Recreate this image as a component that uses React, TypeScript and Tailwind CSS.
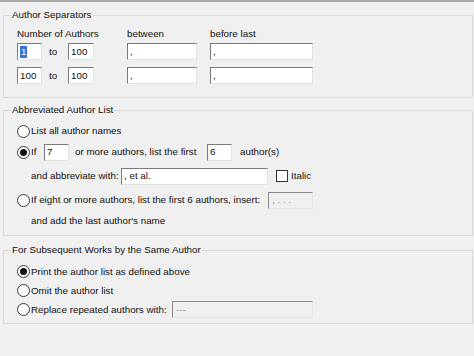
const Radio = ({ checked }: { checked?: boolean }) => (
  <span className="w-[13px] h-[13px] rounded-full border border-[#3a3a3a] bg-white flex items-center justify-center shrink-0">
    {checked && <span className="w-[7px] h-[7px] rounded-full bg-[#111]" />}
  </span>
);

const Box = ({ className, children }: { className: string; children?: React.ReactNode }) => (
  <div
    className={
      'h-[17px] border border-t-[#7a7a7a] border-l-[#7a7a7a] border-r-[#e2e2e2] border-b-[#e2e2e2] bg-white flex items-center pl-[2px] shrink-0 ' +
      className
    }
  >
    {children}
  </div>
);

const Disabled = ({ className, children }: { className: string; children?: React.ReactNode }) => (
  <div
    className={
      'h-[17px] border border-t-[#8a8a8a] border-l-[#8a8a8a] border-r-[#e6e6e6] border-b-[#e6e6e6] bg-[#f0f0f0] flex items-center pl-[3px] text-[#9a9a9a] shrink-0 ' +
      className
    }
  >
    {children}
  </div>
);

export default function App() {
  return (
    <div
      className="w-[474px] h-[356px] bg-[#f0f0f0] text-[#111] text-[9.8px] leading-[12px] overflow-hidden"
      style={{ fontFamily: '"Liberation Sans", Arial, sans-serif' }}
    >
      <div className="h-[2px] bg-[#ababab]" />

      {/* Author Separators */}
      <fieldset className="mt-[7px] ml-[3px] mr-[1px] border border-[#d9d9d9] px-0 pt-[7px] pb-[13px]">
        <legend className="ml-[7px] px-[1px] leading-[12px]">Author Separators</legend>
        <div className="pl-[13px]">
          <div className="flex h-[12px] items-center">
            <span className="w-[110px]">Number of Authors</span>
            <span className="w-[83px]">between</span>
            <span>before last</span>
          </div>
          <div className="flex items-center mt-[3px]">
            <Box className="w-[25px]">
              <span className="bg-[#3377d6] text-white px-[1px]">1</span>
            </Box>
            <span className="w-[19px] ml-[7px]">to</span>
            <Box className="w-[26px]">100</Box>
            <Box className="w-[70px] ml-[33px]">,</Box>
            <Box className="w-[103px] ml-[13px]">,</Box>
          </div>
          <div className="flex items-center mt-[7px]">
            <Box className="w-[25px]">100</Box>
            <span className="w-[19px] ml-[7px]">to</span>
            <Box className="w-[26px]">100</Box>
            <Box className="w-[70px] ml-[33px]">,</Box>
            <Box className="w-[103px] ml-[13px]">,</Box>
          </div>
        </div>
      </fieldset>

      {/* Abbreviated Author List */}
      <fieldset className="mt-[6px] ml-[3px] mr-[1px] border border-[#d9d9d9] px-0 pt-[5px] pb-[4px]">
        <legend className="ml-[7px] px-[1px] leading-[12px]">Abbreviated Author List</legend>
        <div className="pl-[13px] flex flex-col">
          <div className="flex items-center h-[20px]">
            <Radio />
            <span className="ml-[1px]">List all author names</span>
          </div>
          <div className="flex items-center h-[22px]">
            <Radio checked />
            <span className="ml-[1px] w-[13px]">If</span>
            <Box className="w-[25px]">7</Box>
            <span className="w-[138px] pl-[6px]">or more authors, list the first</span>
            <Box className="w-[25px]">6</Box>
            <span className="pl-[8px]">author(s)</span>
          </div>
          <div className="flex items-center h-[26px] pl-[14px]">
            <span className="w-[90px]">and abbreviate with:</span>
            <Box className="w-[147px]">, et al.</Box>
            <span className="ml-[8px] w-[12px] h-[12px] border border-[#333] bg-white shrink-0" />
            <span className="ml-[3px]">Italic</span>
          </div>
          <div className="flex items-center h-[22px]">
            <Radio />
            <span className="ml-[1px] w-[237px]">If eight or more authors, list the first 6 authors, insert:</span>
            <Disabled className="w-[45px]">, . . .</Disabled>
          </div>
          <div className="flex items-center h-[20px] pl-[14px]">
            <span>and add the last author's name</span>
          </div>
        </div>
      </fieldset>

      {/* For Subsequent Works by the Same Author */}
      <fieldset className="mt-[8px] ml-[3px] mr-[1px] border border-[#d9d9d9] px-0 pt-[6px] pb-[4px]">
        <legend className="ml-[7px] px-[1px] leading-[12px]">For Subsequent Works by the Same Author</legend>
        <div className="pl-[13px] flex flex-col">
          <div className="flex items-center h-[19px]">
            <Radio checked />
            <span className="ml-[1px]">Print the author list as defined above</span>
          </div>
          <div className="flex items-center h-[19px]">
            <Radio />
            <span className="ml-[1px]">Omit the author list</span>
          </div>
          <div className="flex items-center h-[19px]">
            <Radio />
            <span className="ml-[1px] w-[141px]">Replace repeated authors with:</span>
            <Disabled className="w-[141px]">---</Disabled>
          </div>
        </div>
      </fieldset>
    </div>
  );
}
